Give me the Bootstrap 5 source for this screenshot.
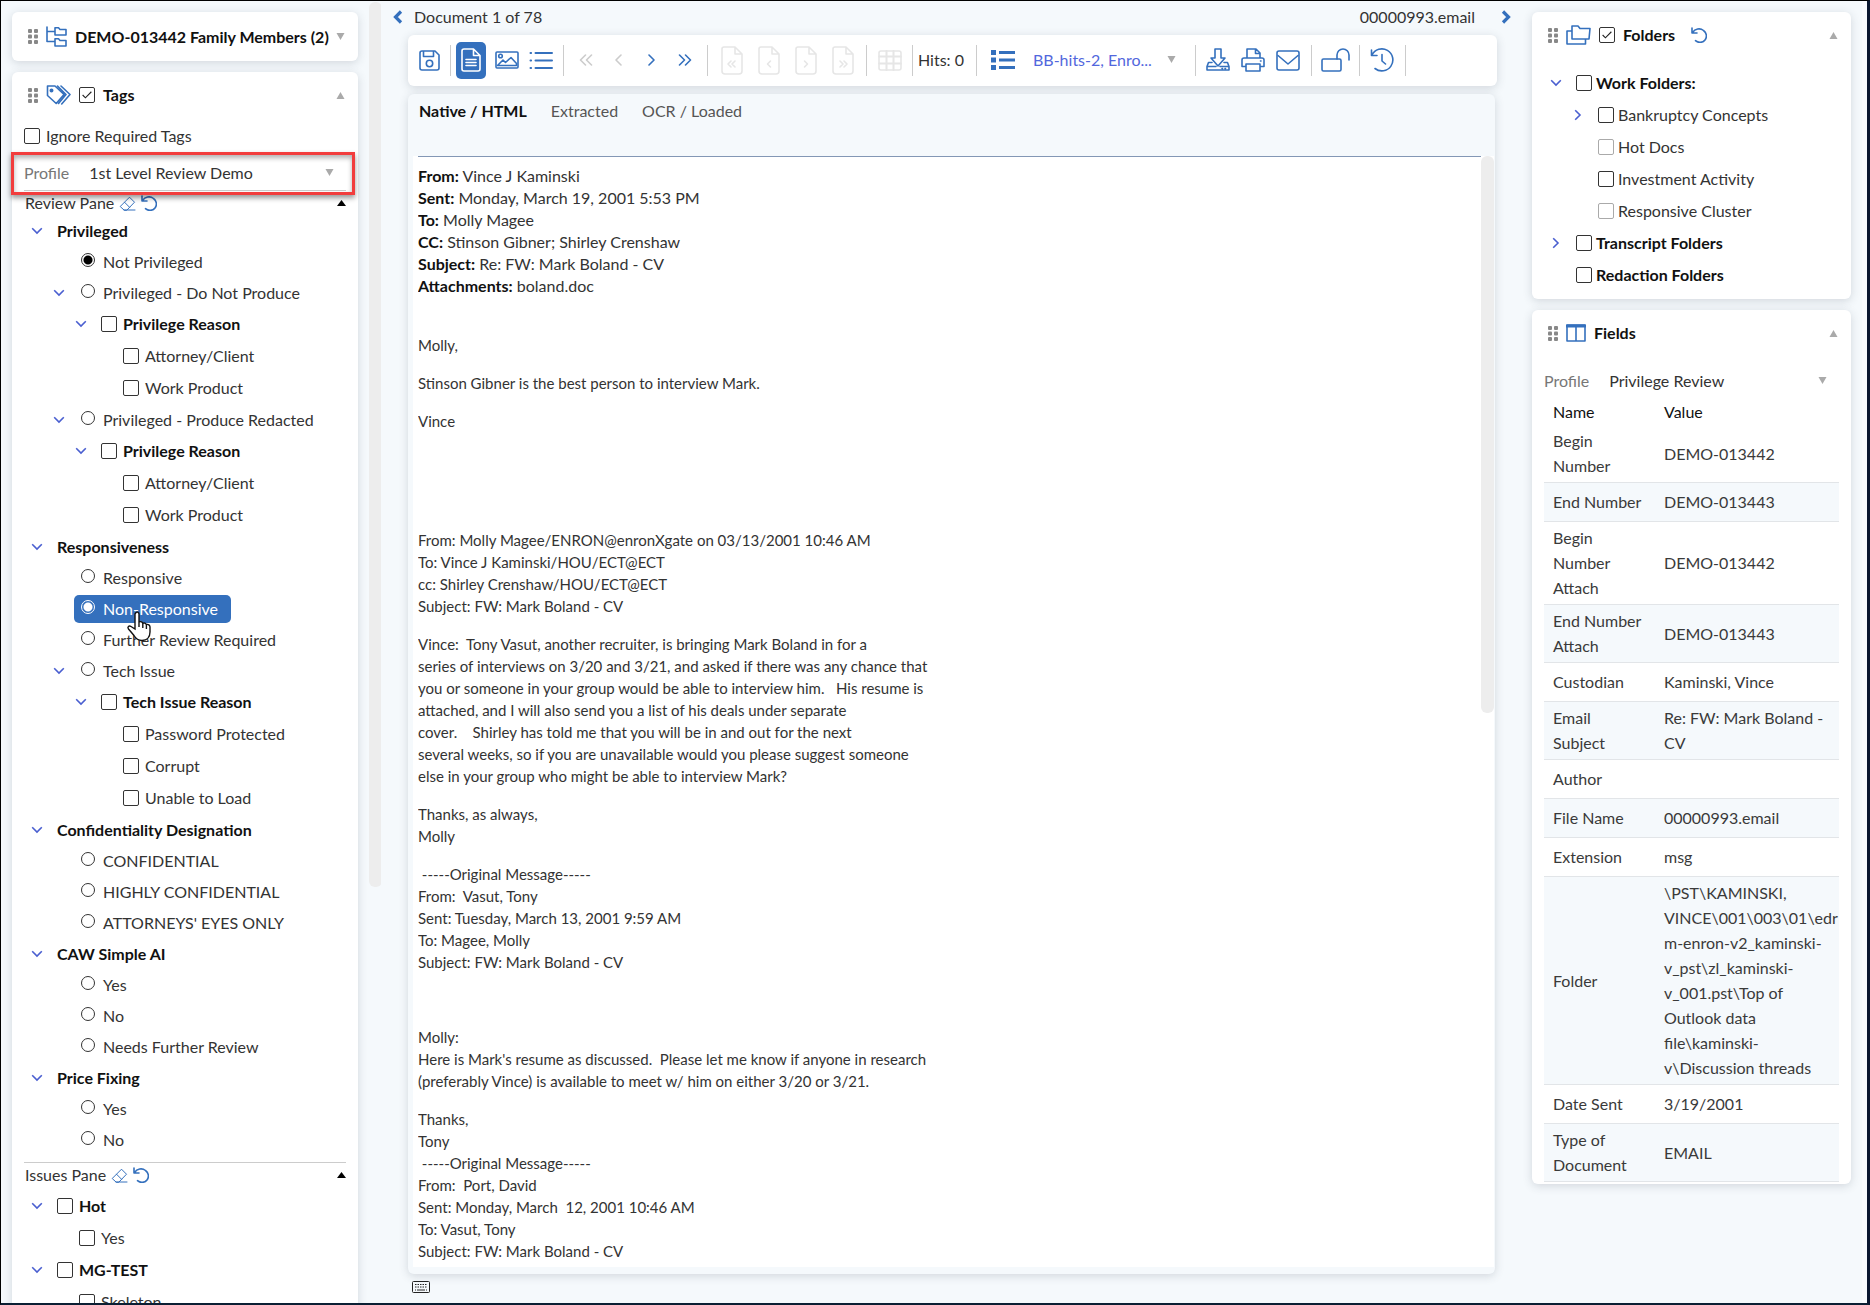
<!DOCTYPE html>
<html lang="en">
<head>
<meta charset="utf-8">
<meta name="viewport" content="width=device-width, initial-scale=1">
<title>Document Review</title>
<link href="https://cdn.jsdelivr.net/npm/bootstrap@5.3.0/dist/css/bootstrap.min.css" rel="stylesheet">
<style>
:root{--blue:#3470bd;--chev:#4a5fd0;--pane:#f5f9fc}
body{font-family:Lato,"Open Sans",sans-serif;font-size:16px;line-height:24px;color:#333;background:var(--pane)}
svg{display:block;flex:none}
.ico{fill:none;stroke:var(--blue);stroke-width:1.6;stroke-linejoin:round;stroke-linecap:round}
button{background:none;border:0;padding:0;color:inherit}
.frame{border:1px solid #000;border-right:3px solid #0b1730;border-bottom:2px solid #0b1f33}
.side-left{width:380px;padding:11px 0 0 11px}
.side-right{width:335px;padding:11px 11px 0 0;gap:11px;border-right:5px solid #f9fbfe}
.stack{width:346px;gap:11px}
.panel{background:#fff;border-radius:6px;box-shadow:0 2px 10px rgba(50,60,80,.18)}
.panel-head{height:46px;padding:0 13px 0 16px}
.panel-title{font-size:16px;font-weight:700;color:#111;margin:0;line-height:24px}
.family{height:49px}
.thumb{width:13px;background:#ededed;border-radius:6px}
.thumb-side{height:885px;margin:-10px 0 0 11px}
.inner{padding:0 12px}
.ignore-row{height:36px}
.ck.form-check-input{width:16px;height:16px;border:1px solid #333;border-radius:2px;margin:0;flex:none;background-color:#fff}
.ck.form-check-input:checked{background-color:#fff;border-color:#333;background-image:url("data:image/svg+xml,%3Csvg xmlns='http://www.w3.org/2000/svg' viewBox='0 0 16 16'%3E%3Cpath fill='none' stroke='%23222' stroke-width='1.3' d='M3 8l3.2 3.2L13 4.3'/%3E%3C/svg%3E");background-size:14px}
.ck.faint{border-color:#aaa}
.rd.form-check-input{width:14px;height:14px;border:1px solid #333;margin:0 0 4px;flex:none;background-color:#fff}
.rd.form-check-input:checked{border-color:#333;background-color:#fff;background-image:radial-gradient(circle,#000 0 4px,transparent 5px)}
.profile{height:37px;border-top:1px solid #ddd;border-bottom:1px solid #ccc;gap:12px}
.profile label{color:#777}
.profile svg{margin-right:12px}
.pick{appearance:none;border:0;background:none;color:#333;padding:0;flex:1;min-width:0;font-size:16px;outline:0}
.callout{left:-13px;right:-9px;top:-3px;bottom:-5px;border:3px solid #f23d3d;box-shadow:0 3px 5px rgba(0,0,0,.4),inset 0 3px 5px rgba(0,0,0,.3);pointer-events:none}
.pane-row{height:24px;gap:5px;padding-left:1px}
.pane-rule{border-top:1px solid #ccc;margin-top:7px;padding-bottom:3px}
.node{height:31px}
.node-ck{height:32px}
.node label,.node-ck label,.node .grp{line-height:24px;white-space:nowrap}
.grp{font-weight:700;color:#111}
.tog{width:26px;margin-right:7px;display:flex;justify-content:center;flex:none}
.l1{padding-left:22px}.l2{padding-left:44px}.l3{padding-left:66px}
.box{gap:6px}
.opt{gap:8px;margin-left:-5px;padding:0 13px 0 7px;height:28px;border-radius:5px}
.opt.on{background:var(--blue);color:#fff}
.opt.on .rd.form-check-input:checked{border-color:#fff;background-color:var(--blue);background-image:radial-gradient(circle,#fff 0 4px,transparent 5px)}
.pointer{left:52px;top:15px;z-index:2}
.doc-head{height:34px;padding:0 21px 2px 12px}
.doc-head span{margin:0 26px 0 11px}
.tools{height:51px;margin:0 35px 0 27px;padding-left:5px}
.tools button,.tools .slot{height:37px;display:flex;align-items:center;justify-content:center;flex:none}
.w32{width:32px}.w33{width:33px}.w34{width:34px}.w35{width:35px}.w37{width:37px}.w42{width:42px}
.tools button.current{width:30px;margin-right:4px;background:var(--blue);border-radius:5px}
.current .ico{stroke:#fff}
.off .ico{stroke:#e6e6e6}
.dim .ico{stroke:#ccc}
.rule-v{width:1px;height:31px;background:#ccc;margin:0 5px;flex:none}
.hits{padding-right:7px}
.hitset{width:166px;padding:0 14px 0 9px}
.hitset .pick{color:#5267dd}
.viewer{margin:8px 37px 0 27px;background:var(--pane);min-height:0}
.tabs{height:62px;padding:5px 11px;gap:24px;color:#555}
.tabs .active{font-weight:700;color:#111}
.sheet{background:#fff;margin:0 1px 7px 5px;min-height:0}
.mail{border-top:1px solid #8397b5;margin-left:5px;padding:8px 3px 0 0;font-size:15px;line-height:22px;overflow:hidden}
.mail p{margin:0 0 16px;white-space:pre-wrap}
.mail .lead-in{font-size:16px;margin-bottom:37px}
.mail .lead-in b{color:#111}
.mail .far{margin-bottom:97px}
.mail .mid{margin-bottom:53px}
.thumb-doc{height:557px}
.foot{height:29px;padding:7px 0 0 31px}
.fold{padding:9px 11px 8px}
.fold .box{gap:4px}
.fields{padding:7px 12px 2px}
.fields .profile{border:0;height:36px}
.grid-table{table-layout:fixed;margin:0;color:#333;--bs-table-bg:transparent}
.grid-table th,.grid-table td{padding:3px 0 4px 9px;line-height:25px;color:#3a3a3a;border-bottom:1px solid #e2e5e8;vertical-align:middle;overflow-wrap:anywhere;background:none;box-shadow:none}
.grid-table thead th{padding:0 9px 1px;border:0;font-weight:400;color:#111}
.grid-table tbody th{font-weight:400;padding-right:11px}
.grid-table tbody tr{height:39px}
.grid-table tbody tr:nth-child(even){background:var(--pane)}
.c1{width:111px}
</style>
<script src="https://cdn.jsdelivr.net/npm/bootstrap@5.3.0/dist/js/bootstrap.bundle.min.js"></script>
</head>
<body>
<svg width="0" height="0" class="position-absolute" aria-hidden="true">
<defs>
<symbol id="grip" viewBox="0 0 10 15"><g fill="#888"><rect width="4" height="4" rx="1"/><rect x="6" width="4" height="4" rx="1"/><rect y="5.500" width="4" height="4" rx="1"/><rect x="6" y="5.500" width="4" height="4" rx="1"/><rect y="11" width="4" height="4" rx="1"/><rect x="6" y="11" width="4" height="4" rx="1"/></g></symbol>
<symbol id="up" viewBox="0 0 9 8"><path d="M4.500 1L8.500 8H.5z"/></symbol>
<symbol id="dn" viewBox="0 0 9 8"><path d="M.5 0h8L4.500 7z"/></symbol>
<symbol id="cd" viewBox="0 0 12 8"><path d="M1.200 1.200L6 6l4.800-4.800" fill="none" stroke="#4a5fd0" stroke-width="1.600"/></symbol>
<symbol id="cr" viewBox="0 0 8 12"><path d="M1.200 1.200L6 6l-4.800 4.800" fill="none" stroke="#4a5fd0" stroke-width="1.600"/></symbol>
<symbol id="undo" viewBox="0 0 16 16"><path d="M1 1v5h5M1.500 5.500C4 1.800 9 .6 12.500 3.500a6.500 6.500 0 1 1-8 10.200"/></symbol>
<symbol id="erase" viewBox="0 0 17 15"><path d="M5 14L1.200 10.500 10.500 1.200l5 5L8 14zM5.500 6.200l5 5M5 14h11"/></symbol>
<symbol id="page" viewBox="0 0 22 29"><path d="M3 1h11l7 7v17a3 3 0 0 1-3 3H4a3 3 0 0 1-3-3V3a2 2 0 0 1 2-2zM14 1v7h7"/></symbol>
</defs>
</svg>

<main class="frame d-flex vh-100 overflow-hidden">
  <aside class="side-left d-flex flex-shrink-0 overflow-hidden">
    <div class="stack d-flex flex-column flex-shrink-0">
      <section class="panel family panel-head d-flex align-items-center flex-shrink-0">
        <svg width="10" height="15"><use href="#grip"/></svg>
        <svg class="ico ms-2" width="21" height="21" viewBox="0 0 21 21"><path d="M1 1v14.500h7.500M1 5.500h7.500M9 1.800h3.500l1.500 1.700h6V9H9zM9 12.800h3.500l1.500 1.700h6V20H9z"/></svg>
        <h2 class="panel-title text-nowrap ms-2">DEMO-013442 Family Members (2)</h2>
        <button class="ms-auto" aria-label="Expand family members"><svg width="9" height="8" fill="#aaa"><use href="#dn"/></svg></button>
      </section>

      <section class="panel flex-grow-1">
        <div class="panel-head d-flex align-items-center">
          <svg width="10" height="15"><use href="#grip"/></svg>
          <svg class="ico ms-2" width="25" height="20" viewBox="0 0 25 20"><path d="M1.500 1H9l9 8.500-7.800 9L1.500 10.500zM11.500 1l8.500 8.500-7.500 9M15 1l9 8.500-8.300 9.500"/><circle cx="5.500" cy="5.500" r="1.200" fill="#3470bd"/></svg>
          <input class="form-check-input ck ms-2" type="checkbox" id="tagsOn" checked>
          <label class="panel-title ms-2" for="tagsOn">Tags</label>
          <button class="ms-auto" aria-label="Collapse tags"><svg width="9" height="8" fill="#aaa"><use href="#up"/></svg></button>
        </div>
        <div class="inner">
          <div class="ignore-row d-flex align-items-center box"><input class="form-check-input ck" type="checkbox" id="ign"><label for="ign">Ignore Required Tags</label></div>
          <div class="profile d-flex align-items-center position-relative">
            <label for="tagProfile">Profile</label>
            <select class="pick ms-2" id="tagProfile"><option>1st Level Review Demo</option></select>
            <svg width="9" height="8" fill="#aaa"><use href="#dn"/></svg>
            <div class="callout position-absolute"></div>
          </div>
          <div class="pane-row d-flex align-items-center">
            <span>Review Pane</span>
            <button aria-label="Clear review pane"><svg class="ico" style="stroke-width:1" width="17" height="15"><use href="#erase"/></svg></button>
            <button aria-label="Undo review pane"><svg class="ico" width="16" height="16"><use href="#undo"/></svg></button>
            <button class="ms-auto" aria-label="Collapse review pane"><svg width="9" height="6" viewBox="0 0 9 6"><path d="M4.500 0L9 6H0z"/></svg></button>
          </div>

          <div class="node d-flex align-items-center"><button class="tog" aria-label="Toggle"><svg width="12" height="8"><use href="#cd"/></svg></button><span class="grp">Privileged</span></div>
          <div class="node l1 d-flex align-items-center"><span class="tog"></span><div class="opt d-flex align-items-center"><input class="form-check-input rd" type="radio" name="priv" id="p1" checked><label for="p1">Not Privileged</label></div></div>
          <div class="node l1 d-flex align-items-center"><button class="tog" aria-label="Toggle"><svg width="12" height="8"><use href="#cd"/></svg></button><div class="opt d-flex align-items-center"><input class="form-check-input rd" type="radio" name="priv" id="p2"><label for="p2">Privileged - Do Not Produce</label></div></div>
          <div class="node-ck l2 d-flex align-items-center"><button class="tog" aria-label="Toggle"><svg width="12" height="8"><use href="#cd"/></svg></button><div class="box d-flex align-items-center"><input class="form-check-input ck" type="checkbox" id="p3"><label class="grp" for="p3">Privilege Reason</label></div></div>
          <div class="node-ck l3 d-flex align-items-center"><span class="tog"></span><div class="box d-flex align-items-center"><input class="form-check-input ck" type="checkbox" id="p4"><label for="p4">Attorney/Client</label></div></div>
          <div class="node-ck l3 d-flex align-items-center"><span class="tog"></span><div class="box d-flex align-items-center"><input class="form-check-input ck" type="checkbox" id="p5"><label for="p5">Work Product</label></div></div>
          <div class="node l1 d-flex align-items-center"><button class="tog" aria-label="Toggle"><svg width="12" height="8"><use href="#cd"/></svg></button><div class="opt d-flex align-items-center"><input class="form-check-input rd" type="radio" name="priv" id="p6"><label for="p6">Privileged - Produce Redacted</label></div></div>
          <div class="node-ck l2 d-flex align-items-center"><button class="tog" aria-label="Toggle"><svg width="12" height="8"><use href="#cd"/></svg></button><div class="box d-flex align-items-center"><input class="form-check-input ck" type="checkbox" id="p7"><label class="grp" for="p7">Privilege Reason</label></div></div>
          <div class="node-ck l3 d-flex align-items-center"><span class="tog"></span><div class="box d-flex align-items-center"><input class="form-check-input ck" type="checkbox" id="p8"><label for="p8">Attorney/Client</label></div></div>
          <div class="node-ck l3 d-flex align-items-center"><span class="tog"></span><div class="box d-flex align-items-center"><input class="form-check-input ck" type="checkbox" id="p9"><label for="p9">Work Product</label></div></div>

          <div class="node d-flex align-items-center"><button class="tog" aria-label="Toggle"><svg width="12" height="8"><use href="#cd"/></svg></button><span class="grp">Responsiveness</span></div>
          <div class="node l1 d-flex align-items-center"><span class="tog"></span><div class="opt d-flex align-items-center"><input class="form-check-input rd" type="radio" name="resp" id="r1"><label for="r1">Responsive</label></div></div>
          <div class="node l1 d-flex align-items-center"><span class="tog"></span><div class="opt on d-flex align-items-center position-relative"><input class="form-check-input rd" type="radio" name="resp" id="r2" checked><label for="r2">Non-Responsive</label>
            <svg class="pointer position-absolute" width="26" height="32" viewBox="0 0 26 32"><path d="M10 2.500c1.500-1 3 0 3 1.500v8c2-1 3.500 0 3.800 1.300 1.500-.8 3 0 3.500 1.200 2-.5 3.700.5 3.700 2.500v5c0 5-3 8.500-8 8.500-4 0-6-1.500-8-5l-5.500-6.500c-1.500-2 .5-3.800 2.500-2.500L9 19V4zM13 12v5M16.800 13.500V18M20.400 14.800V19" fill="#fff" stroke="#111" stroke-width="1.400"/></svg></div></div>
          <div class="node l1 d-flex align-items-center"><span class="tog"></span><div class="opt d-flex align-items-center"><input class="form-check-input rd" type="radio" name="resp" id="r3"><label for="r3">Further Review Required</label></div></div>
          <div class="node l1 d-flex align-items-center"><button class="tog" aria-label="Toggle"><svg width="12" height="8"><use href="#cd"/></svg></button><div class="opt d-flex align-items-center"><input class="form-check-input rd" type="radio" name="resp" id="r4"><label for="r4">Tech Issue</label></div></div>
          <div class="node-ck l2 d-flex align-items-center"><button class="tog" aria-label="Toggle"><svg width="12" height="8"><use href="#cd"/></svg></button><div class="box d-flex align-items-center"><input class="form-check-input ck" type="checkbox" id="r5"><label class="grp" for="r5">Tech Issue Reason</label></div></div>
          <div class="node-ck l3 d-flex align-items-center"><span class="tog"></span><div class="box d-flex align-items-center"><input class="form-check-input ck" type="checkbox" id="r6"><label for="r6">Password Protected</label></div></div>
          <div class="node-ck l3 d-flex align-items-center"><span class="tog"></span><div class="box d-flex align-items-center"><input class="form-check-input ck" type="checkbox" id="r7"><label for="r7">Corrupt</label></div></div>
          <div class="node-ck l3 d-flex align-items-center"><span class="tog"></span><div class="box d-flex align-items-center"><input class="form-check-input ck" type="checkbox" id="r8"><label for="r8">Unable to Load</label></div></div>

          <div class="node d-flex align-items-center"><button class="tog" aria-label="Toggle"><svg width="12" height="8"><use href="#cd"/></svg></button><span class="grp">Confidentiality Designation</span></div>
          <div class="node l1 d-flex align-items-center"><span class="tog"></span><div class="opt d-flex align-items-center"><input class="form-check-input rd" type="radio" name="conf" id="c1"><label for="c1">CONFIDENTIAL</label></div></div>
          <div class="node l1 d-flex align-items-center"><span class="tog"></span><div class="opt d-flex align-items-center"><input class="form-check-input rd" type="radio" name="conf" id="c2"><label for="c2">HIGHLY CONFIDENTIAL</label></div></div>
          <div class="node l1 d-flex align-items-center"><span class="tog"></span><div class="opt d-flex align-items-center"><input class="form-check-input rd" type="radio" name="conf" id="c3"><label for="c3">ATTORNEYS' EYES ONLY</label></div></div>

          <div class="node d-flex align-items-center"><button class="tog" aria-label="Toggle"><svg width="12" height="8"><use href="#cd"/></svg></button><span class="grp">CAW Simple AI</span></div>
          <div class="node l1 d-flex align-items-center"><span class="tog"></span><div class="opt d-flex align-items-center"><input class="form-check-input rd" type="radio" name="caw" id="a1"><label for="a1">Yes</label></div></div>
          <div class="node l1 d-flex align-items-center"><span class="tog"></span><div class="opt d-flex align-items-center"><input class="form-check-input rd" type="radio" name="caw" id="a2"><label for="a2">No</label></div></div>
          <div class="node l1 d-flex align-items-center"><span class="tog"></span><div class="opt d-flex align-items-center"><input class="form-check-input rd" type="radio" name="caw" id="a3"><label for="a3">Needs Further Review</label></div></div>

          <div class="node d-flex align-items-center"><button class="tog" aria-label="Toggle"><svg width="12" height="8"><use href="#cd"/></svg></button><span class="grp">Price Fixing</span></div>
          <div class="node l1 d-flex align-items-center"><span class="tog"></span><div class="opt d-flex align-items-center"><input class="form-check-input rd" type="radio" name="price" id="x1"><label for="x1">Yes</label></div></div>
          <div class="node l1 d-flex align-items-center"><span class="tog"></span><div class="opt d-flex align-items-center"><input class="form-check-input rd" type="radio" name="price" id="x2"><label for="x2">No</label></div></div>

          <div class="pane-rule">
            <div class="pane-row d-flex align-items-center">
              <span>Issues Pane</span>
              <button aria-label="Clear issues pane"><svg class="ico" style="stroke-width:1" width="17" height="15"><use href="#erase"/></svg></button>
              <button aria-label="Undo issues pane"><svg class="ico" width="16" height="16"><use href="#undo"/></svg></button>
              <button class="ms-auto" aria-label="Collapse issues pane"><svg width="9" height="6" viewBox="0 0 9 6"><path d="M4.500 0L9 6H0z"/></svg></button>
            </div>
          </div>
          <div class="node-ck d-flex align-items-center"><button class="tog" aria-label="Toggle"><svg width="12" height="8"><use href="#cd"/></svg></button><div class="box d-flex align-items-center"><input class="form-check-input ck" type="checkbox" id="i1"><label class="grp" for="i1">Hot</label></div></div>
          <div class="node-ck l1 d-flex align-items-center"><span class="tog"></span><div class="box d-flex align-items-center"><input class="form-check-input ck" type="checkbox" id="i2"><label for="i2">Yes</label></div></div>
          <div class="node-ck d-flex align-items-center"><button class="tog" aria-label="Toggle"><svg width="12" height="8"><use href="#cd"/></svg></button><div class="box d-flex align-items-center"><input class="form-check-input ck" type="checkbox" id="i3"><label class="grp" for="i3">MG-TEST</label></div></div>
          <div class="node-ck l1 d-flex align-items-center"><span class="tog"></span><div class="box d-flex align-items-center"><input class="form-check-input ck" type="checkbox" id="i4"><label for="i4">Skeleton</label></div></div>
        </div>
      </section>
    </div>
    <div class="thumb thumb-side flex-shrink-0"></div>
  </aside>

  <section class="d-flex flex-column flex-grow-1 overflow-hidden">
    <header class="doc-head d-flex align-items-center">
      <button aria-label="Previous document"><svg width="10" height="14" viewBox="0 0 10 14"><path d="M8 1.500L2.500 7 8 12.500" fill="none" stroke="#3470bd" stroke-width="3.200"/></svg></button>
      <span>Document 1 of 78</span>
      <span class="ms-auto">00000993.email</span>
      <button aria-label="Next document"><svg width="10" height="14" viewBox="0 0 10 14"><path d="M2 1.500L7.500 7 2 12.500" fill="none" stroke="#3470bd" stroke-width="3.200"/></svg></button>
    </header>

    <div class="panel tools d-flex align-items-center flex-shrink-0">
      <button class="w32" aria-label="Save"><svg class="ico" width="21" height="21" viewBox="0 0 21 21"><path d="M1 3a2 2 0 0 1 2-2h13l4 4v13a2 2 0 0 1-2 2H3a2 2 0 0 1-2-2zM4.500 1v5.500h10V1"/><circle cx="10.500" cy="13.500" r="3.200"/></svg></button>
      <span class="rule-v"></span>
      <button class="current" aria-label="Document view"><svg class="ico" width="20" height="24" viewBox="0 0 20 24"><path d="M3 1h9.500L19 7.500V21a2 2 0 0 1-2 2H3a2 2 0 0 1-2-2V3a2 2 0 0 1 2-2zM12.500 1v6.500H19M5 11.500h10M5 14.500h10M5 17.500h10"/></svg></button>
      <button class="w34" aria-label="Image view"><svg class="ico" width="24" height="18" viewBox="0 0 24 18"><rect x="1" y="1" width="22" height="16" rx="1"/><circle cx="5.500" cy="5" r="1.800"/><path d="M2.500 14.500L8 9l2.500 2.500L16 6.500l5.500 6v2z"/></svg></button>
      <button class="w34" aria-label="List view"><svg class="ico" width="24" height="19" viewBox="0 0 24 19"><path d="M6.500 2H23M6.500 9.500H23M6.500 17H23M1.500 2h.6M1.500 9.500h.6M1.500 17h.6" stroke-width="2"/></svg></button>
      <span class="rule-v"></span>
      <button class="w33 dim" aria-label="First"><svg class="ico" width="14" height="12" viewBox="0 0 14 12"><path d="M6.500 1L1.500 6l5 5M12.500 1l-5 5 5 5"/></svg></button>
      <button class="w33 dim" aria-label="Previous"><svg class="ico" width="7" height="12" viewBox="0 0 7 12"><path d="M6 1L1 6l5 5"/></svg></button>
      <button class="w33" aria-label="Next"><svg class="ico" width="7" height="12" viewBox="0 0 7 12"><path d="M1 1l5 5-5 5"/></svg></button>
      <button class="w34" aria-label="Last"><svg class="ico" width="14" height="12" viewBox="0 0 14 12"><path d="M1.500 1l5 5-5 5M7.500 1l5 5-5 5"/></svg></button>
      <span class="rule-v"></span>
      <button class="w37 off" aria-label="First page"><svg class="ico" width="22" height="29" viewBox="0 0 22 29"><use href="#page"/><path d="M10 15l-3 3 3 3M14 15l-3 3 3 3"/></svg></button>
      <button class="w37 off" aria-label="Previous page"><svg class="ico" width="22" height="29" viewBox="0 0 22 29"><use href="#page"/><path d="M12.500 15l-3 3 3 3"/></svg></button>
      <button class="w37 off" aria-label="Next page"><svg class="ico" width="22" height="29" viewBox="0 0 22 29"><use href="#page"/><path d="M9.500 15l3 3-3 3"/></svg></button>
      <button class="w37 off" aria-label="Last page"><svg class="ico" width="22" height="29" viewBox="0 0 22 29"><use href="#page"/><path d="M8 15l3 3-3 3M12 15l3 3-3 3"/></svg></button>
      <span class="rule-v"></span>
      <button class="w35 off" aria-label="Grid"><svg class="ico" width="24" height="21" viewBox="0 0 24 21"><rect x="1" y="1" width="22" height="19" rx="2"/><path d="M1 6.500h22M1 13.500h22M8.500 1v19M15.500 1v19" stroke-width="2"/></svg></button>
      <span class="rule-v"></span>
      <span class="hits text-nowrap">Hits: 0</span>
      <span class="rule-v"></span>
      <span class="slot w42"><svg width="24" height="20" viewBox="0 0 24 20"><path d="M0 0h5v5H0zM0 7.500h5v5H0zM0 15h5v5H0zM8 1h16v3H8zM8 8.500h16v3H8zM8 16h16v3H8z" fill="#3470bd"/></svg></span>
      <span class="hitset d-flex align-items-center"><select class="pick" aria-label="Hit sets"><option>BB-hits-2, Enro...</option></select><svg width="9" height="8" fill="#aaa"><use href="#dn"/></svg></span>
      <span class="rule-v"></span>
      <button class="w35" aria-label="Download"><svg class="ico" width="24" height="24" viewBox="0 0 24 24"><path d="M9 1h6v9h4l-7 8-7-8h4zM6 14.500H2.500L1 18.500V22h22v-3.500l-1.500-4H18M1 18.500h9M14 18.500h9M16 20.500h.5M19 20.500h.5"/></svg></button>
      <button class="w35" aria-label="Print"><svg class="ico" width="24" height="24" viewBox="0 0 24 24"><path d="M6 10V1h9l4 4v5M14.500 1v4.500H19M5 18.500H1V12a2 2 0 0 1 2-2h18a2 2 0 0 1 2 2v6.500h-4M5 16h14v7H5zM19.500 13h.5"/></svg></button>
      <button class="w35" aria-label="Mail"><svg class="ico" width="24" height="21" viewBox="0 0 24 21"><rect x="1" y="1" width="22" height="19" rx="2"/><path d="M2 5.500l10 8.500 10-8.500"/></svg></button>
      <span class="rule-v"></span>
      <button class="w37" aria-label="Unlock"><svg class="ico" width="29" height="24" viewBox="0 0 29 24"><rect x="1" y="11" width="19" height="12" rx="1.500"/><path d="M16 11V7a6 6 0 0 1 12 0v5"/></svg></button>
      <span class="rule-v"></span>
      <button class="w35" aria-label="History"><svg class="ico" width="24" height="24" viewBox="0 0 24 24"><path d="M1.500 2v5.500H7M2 7A11 11 0 1 1 5 20.500M12 6.500V13l3.500 3"/></svg></button>
      <span class="rule-v"></span>
    </div>

    <div class="panel viewer flex-grow-1 d-flex flex-column">
      <nav class="tabs d-flex align-items-start flex-shrink-0">
        <button class="active">Native / HTML</button><button>Extracted</button><button>OCR / Loaded</button>
      </nav>
      <div class="sheet d-flex flex-grow-1">
        <article class="mail flex-grow-1">
<p class="lead-in"><b>From:</b> Vince J Kaminski
<b>Sent:</b> Monday, March 19, 2001 5:53 PM
<b>To:</b> Molly Magee
<b>CC:</b> Stinson Gibner; Shirley Crenshaw
<b>Subject:</b> Re: FW: Mark Boland - CV
<b>Attachments:</b> boland.doc</p>
<p>Molly,</p>
<p>Stinson Gibner is the best person to interview Mark.</p>
<p class="far">Vince</p>
<p>From: Molly Magee/ENRON@enronXgate on 03/13/2001 10:46 AM
To: Vince J Kaminski/HOU/ECT@ECT
cc: Shirley Crenshaw/HOU/ECT@ECT
Subject: FW: Mark Boland - CV</p>
<p>Vince:  Tony Vasut, another recruiter, is bringing Mark Boland in for a
series of interviews on 3/20 and 3/21, and asked if there was any chance that
you or someone in your group would be able to interview him.   His resume is
attached, and I will also send you a list of his deals under separate
cover.    Shirley has told me that you will be in and out for the next
several weeks, so if you are unavailable would you please suggest someone
else in your group who might be able to interview Mark?</p>
<p>Thanks, as always,
Molly</p>
<p class="mid"> -----Original Message-----
From:  Vasut, Tony
Sent: Tuesday, March 13, 2001 9:59 AM
To: Magee, Molly
Subject: FW: Mark Boland - CV</p>
<p>Molly:
Here is Mark's resume as discussed.  Please let me know if anyone in research
(preferably Vince) is available to meet w/ him on either 3/20 or 3/21.</p>
<p>Thanks,
Tony
 -----Original Message-----
From:  Port, David
Sent: Monday, March  12, 2001 10:46 AM
To: Vasut, Tony
Subject: FW: Mark Boland - CV</p>
        </article>
        <div class="thumb thumb-doc flex-shrink-0"></div>
      </div>
    </div>
    <footer class="foot flex-shrink-0"><svg width="18" height="12" viewBox="0 0 18 12" fill="none" stroke="#222"><rect x=".5" y=".5" width="17" height="11" rx="1"/><path d="M3 3.500h12M3 6h12" stroke-dasharray="1.500 1"/><path d="M5 9h8M3 9h1M14 9h1"/></svg></footer>
  </section>

  <aside class="side-right d-flex flex-column flex-shrink-0">
    <section class="panel">
      <div class="panel-head d-flex align-items-center">
        <svg width="10" height="15"><use href="#grip"/></svg>
        <svg class="ico ms-2" width="25" height="20" viewBox="0 0 25 20"><path d="M6 1h6l2 2.500h10L23 14H6zM6 6H1v13h18.500v-4.500"/></svg>
        <input class="form-check-input ck ms-2" type="checkbox" id="foldOn" checked>
        <label class="panel-title ms-2" for="foldOn">Folders</label>
        <button class="ms-3" aria-label="Undo folders"><svg class="ico" width="16" height="16"><use href="#undo"/></svg></button>
        <button class="ms-auto" aria-label="Collapse folders"><svg width="9" height="8" fill="#aaa"><use href="#up"/></svg></button>
      </div>
      <div class="fold">
        <div class="node-ck d-flex align-items-center"><button class="tog" aria-label="Toggle"><svg width="12" height="8"><use href="#cd"/></svg></button><div class="box d-flex align-items-center"><input class="form-check-input ck" type="checkbox" id="f1"><label class="grp" for="f1">Work Folders:</label></div></div>
        <div class="node-ck l1 d-flex align-items-center"><button class="tog" aria-label="Toggle"><svg width="8" height="12"><use href="#cr"/></svg></button><div class="box d-flex align-items-center"><input class="form-check-input ck" type="checkbox" id="f2"><label for="f2">Bankruptcy Concepts</label></div></div>
        <div class="node-ck l1 d-flex align-items-center"><span class="tog"></span><div class="box d-flex align-items-center"><input class="form-check-input ck faint" type="checkbox" id="f3"><label for="f3">Hot Docs</label></div></div>
        <div class="node-ck l1 d-flex align-items-center"><span class="tog"></span><div class="box d-flex align-items-center"><input class="form-check-input ck" type="checkbox" id="f4"><label for="f4">Investment Activity</label></div></div>
        <div class="node-ck l1 d-flex align-items-center"><span class="tog"></span><div class="box d-flex align-items-center"><input class="form-check-input ck faint" type="checkbox" id="f5"><label for="f5">Responsive Cluster</label></div></div>
        <div class="node-ck d-flex align-items-center"><button class="tog" aria-label="Toggle"><svg width="8" height="12"><use href="#cr"/></svg></button><div class="box d-flex align-items-center"><input class="form-check-input ck" type="checkbox" id="f6"><label class="grp" for="f6">Transcript Folders</label></div></div>
        <div class="node-ck d-flex align-items-center"><span class="tog"></span><div class="box d-flex align-items-center"><input class="form-check-input ck" type="checkbox" id="f7"><label class="grp" for="f7">Redaction Folders</label></div></div>
      </div>
    </section>

    <section class="panel">
      <div class="panel-head d-flex align-items-center">
        <svg width="10" height="15"><use href="#grip"/></svg>
        <svg class="ico ms-2" width="20" height="18" viewBox="0 0 20 18"><path d="M1 1h18v16H1zM10 2v15"/><path d="M1 2h18" stroke-width="3"/></svg>
        <h2 class="panel-title ms-2">Fields</h2>
        <button class="ms-auto" aria-label="Collapse fields"><svg width="9" height="8" fill="#aaa"><use href="#up"/></svg></button>
      </div>
      <div class="fields">
        <div class="profile d-flex align-items-center">
          <label for="fieldProfile">Profile</label>
          <select class="pick ms-2" id="fieldProfile"><option>Privilege Review</option></select>
          <svg width="9" height="8" fill="#aaa"><use href="#dn"/></svg>
        </div>
        <table class="table grid-table">
          <thead><tr><th class="c1" scope="col">Name</th><th scope="col">Value</th></tr></thead>
          <tbody>
            <tr><th scope="row">Begin Number</th><td>DEMO-013442</td></tr>
            <tr><th scope="row">End Number</th><td>DEMO-013443</td></tr>
            <tr><th scope="row">Begin Number Attach</th><td>DEMO-013442</td></tr>
            <tr><th scope="row">End Number Attach</th><td>DEMO-013443</td></tr>
            <tr><th scope="row">Custodian</th><td>Kaminski, Vince</td></tr>
            <tr><th scope="row">Email Subject</th><td>Re: FW: Mark Boland - CV</td></tr>
            <tr><th scope="row">Author</th><td></td></tr>
            <tr><th scope="row">File Name</th><td>00000993.email</td></tr>
            <tr><th scope="row">Extension</th><td>msg</td></tr>
            <tr><th scope="row">Folder</th><td>\PST\KAMINSKI,<br>VINCE\001\003\01\edr<br>m-enron-v2_kaminski-<br>v_pst\zl_kaminski-<br>v_001.pst\Top of<br>Outlook data<br>file\kaminski-<br>v\Discussion threads</td></tr>
            <tr><th scope="row">Date Sent</th><td>3/19/2001</td></tr>
            <tr><th scope="row">Type of Document</th><td>EMAIL</td></tr>
          </tbody>
        </table>
      </div>
    </section>
  </aside>
</main>
</body>
</html>
